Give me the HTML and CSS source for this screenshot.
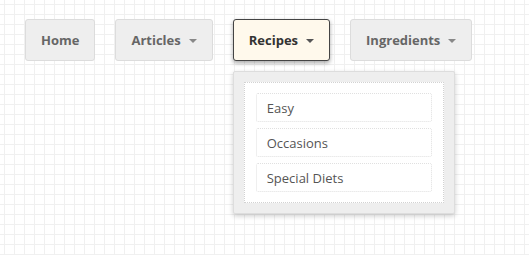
FILE: index.html
```html
<!DOCTYPE html>
<html>
  <head>
    <title>Menu</title>
    <meta charset="utf-8" />
    <link rel="stylesheet" href="styles.css">
  </head>
  <body>
    <ul class="menu">
      <li class="menu-item"><a class="botao">Home</a></li>
      <li class="menu-item"><a class="botao">Articles <span class="seta"></span></a></li>
      <li class="menu-item aberto">
        <a class="botao">Recipes <span class="seta"></span></a>
        <div class="submenu">
          <ul class="submenu-lista">
            <li class="submenu-item">Easy</li>
            <li class="submenu-item">Occasions</li>
            <li class="submenu-item">Special Diets</li>
          </ul>
        </div>
      </li>
      <li class="menu-item"><a class="botao">Ingredients <span class="seta"></span></a></li>
    </ul>
  </body>
</html>
```

FILE: styles.css
```css
body {
    margin: 0;
    font-family: "Open Sans", sans-serif;
    background-color: #fff;
    background-image:
        linear-gradient(to right, #f0f0f0 1px, transparent 1px),
        linear-gradient(to bottom, #f0f0f0 1px, transparent 1px);
    background-size: 10px 10px;
    background-position: 4px 4px;
    height: 255px;
}

.menu {
    list-style: none;
    margin: 0;
    padding: 19px 0 0 25px;
    display: flex;
    gap: 20px;
}

.menu-item {
    position: relative;
}

.botao {
    display: flex;
    align-items: center;
    gap: 8px;
    box-sizing: border-box;
    height: 42px;
    padding: 0 15px;
    font-size: 13px;
    font-weight: bold;
    color: #666;
    background-color: #eeeeee;
    border: 1px solid #dcdcdc;
    border-radius: 3px;
    cursor: pointer;
}

.seta {
    width: 0;
    height: 0;
    border-left: 4px solid transparent;
    border-right: 4px solid transparent;
    border-top: 4px solid #888;
    margin-top: 1px;
}

.aberto .botao {
    color: #333;
    background-color: #fff9ec;
    border-color: #444;
    box-shadow: 0 2px 4px rgba(0, 0, 0, 0.35);
}

.aberto .seta {
    border-top-color: #555;
}

.submenu {
    position: absolute;
    top: 52px;
    left: 0;
    width: 222px;
    box-sizing: border-box;
    padding: 10px;
    background-color: #eeeeee;
    border: 1px solid #dddddd;
    border-radius: 2px;
    box-shadow: 0 2px 5px rgba(0, 0, 0, 0.2);
}

.submenu-lista {
    list-style: none;
    margin: 0;
    padding: 10px 11px;
    background-color: #fff;
    border: 1px dotted #d2d2d2;
    display: flex;
    flex-direction: column;
    gap: 6px;
}

.submenu-item {
    height: 29px;
    box-sizing: border-box;
    padding: 0 10px;
    display: flex;
    align-items: center;
    font-size: 13px;
    color: #555;
    border: 1px dotted #e0e0e0;
    border-radius: 2px;
}
```
